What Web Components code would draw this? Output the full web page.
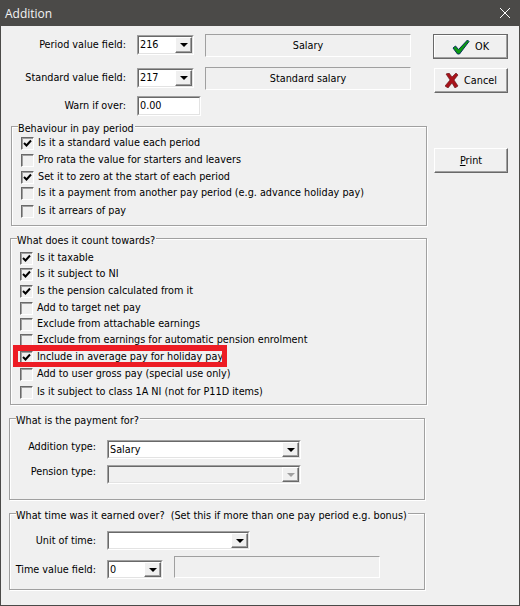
<!DOCTYPE html>
<html>
<head>
<meta charset="utf-8">
<title>Addition</title>
<style>
  html, body { margin: 0; padding: 0; background: #f0f0f0; }
  body { width: 520px; height: 606px; overflow: hidden; font: 10.75px "DejaVu Sans Condensed", "Liberation Sans", Arial, sans-serif; color: #000; }
</style>
</head>
<body>
<win-dialog caption="Addition">
  <div slot="left">
    <form-row label="Period value field:" labelwidth="125" gap="11" bottom="11">
      <combo-box value="216" width="57" height="20"></combo-box>
      <static-field text="Salary" width="206" left="11"></static-field>
    </form-row>
    <form-row label="Standard value field:" labelwidth="125" gap="11" bottom="6">
      <combo-box value="217" width="57" height="20"></combo-box>
      <static-field text="Standard salary" width="206" left="11"></static-field>
    </form-row>
    <form-row label="Warn if over:" labelwidth="125" gap="11" bottom="0">
      <text-field value="0.00" width="64"></text-field>
    </form-row>

    <group-box caption="Behaviour in pay period" left="10" width="416" top="10" height="100" inset="9" first="-1">
      <check-row pitch="17" checked>Is it a standard value each period</check-row>
      <check-row pitch="17">Pro rata the value for starters and leavers</check-row>
      <check-row pitch="16" checked>Set it to zero at the start of each period</check-row>
      <check-row pitch="18">Is it a payment from another pay period (e.g. advance holiday pay)</check-row>
      <check-row pitch="17">Is it arrears of pay</check-row>
    </group-box>

    <group-box caption="What does it count towards?" left="9" width="417" top="12" height="167" inset="9" first="2">
      <check-row pitch="16" checked>Is it taxable</check-row>
      <check-row pitch="17" checked>Is it subject to NI</check-row>
      <check-row pitch="17" checked>Is the pension calculated from it</check-row>
      <check-row pitch="16">Add to target net pay</check-row>
      <check-row pitch="16">Exclude from attachable earnings</check-row>
      <check-row pitch="17">Exclude from earnings for automatic pension enrolment</check-row>
      <check-row pitch="17" checked marked>Include in average pay for holiday pay</check-row>
      <check-row pitch="18">Add to user gross pay (special use only)</check-row>
      <check-row pitch="17">Is it subject to class 1A NI (not for P11D items)</check-row>
    </group-box>

    <group-box caption="What is the payment for?" left="8" width="416" top="13" height="82" inset="0" first="12">
      <form-row label="Addition type:" labelwidth="86" gap="11" bottom="6" raise="3">
        <combo-box value="Salary" width="194" height="19"></combo-box>
      </form-row>
      <form-row label="Pension type:" labelwidth="86" gap="11" bottom="0" raise="3">
        <combo-box disabled width="194" height="19"></combo-box>
      </form-row>
    </group-box>

    <group-box caption="What time was it earned over?  (Set this if more than one pay period e.g. bonus)" left="8" width="416" top="13" height="77" inset="0" first="8">
      <form-row label="Unit of time:" labelwidth="86" gap="11" bottom="10">
        <combo-box width="143" height="19"></combo-box>
      </form-row>
      <form-row label="Time value field:" labelwidth="86" gap="11" bottom="0">
        <combo-box value="0" width="56" height="19"></combo-box>
        <static-field width="206" left="11" height="22" lift="4"></static-field>
      </form-row>
    </group-box>
  </div>
  <div slot="right">
    <push-button icon="ok" default>OK</push-button>
    <push-button icon="cancel" top="9" left="1">Cancel</push-button>
    <push-button top="55" left="1"><u>P</u>rint</push-button>
  </div>
</win-dialog>

<script>
/**
 * DIALOG FRAME
 * */

class WinDialog extends HTMLElement {
  constructor() {
    super();
    const shadow = this.attachShadow({ mode: "open" });
    shadow.innerHTML = `
      <style>
        :host { display: block; width: 520px; height: 606px; box-sizing: border-box; border: 1px solid #4b4a48; border-top: 0; background: #f0f0f0; }
        .title { height: 26px; margin: 0 -1px; background: #4b4a48; color: #f4f4f4; display: flex; align-items: center; justify-content: space-between; padding: 0 9px 0 5px; font: 12px "Open Sans", "Liberation Sans", sans-serif; }
        .body { display: flex; }
        .left { width: 432px; padding-top: 9px; }
        .right { padding-top: 8px; }
        svg { display: block; }
      </style>
      <div class="title">
        <span id="caption"></span>
        <svg width="12" height="12" viewBox="0 0 12 12"><path d="M1 1 11 11M11 1 1 11" stroke="#fff" stroke-width="1" fill="none"/></svg>
      </div>
      <div class="body">
        <div class="left"><slot name="left"></slot></div>
        <div class="right"><slot name="right"></slot></div>
      </div>`;
    shadow.getElementById("caption").textContent = this.getAttribute("caption");
  }
}
customElements.define("win-dialog", WinDialog);

/**
 * FORM CONTROLS
 * */

class FormRow extends HTMLElement {
  constructor() {
    super();
    const shadow = this.attachShadow({ mode: "open" });
    const labelWidth = this.getAttribute("labelwidth") || 126;
    const raise = this.getAttribute("raise") || 0;
    shadow.innerHTML = `
      <style>
        :host { display: flex; align-items: flex-start; margin-bottom: ${this.getAttribute("bottom") || 0}px; }
        .label { width: ${labelWidth}px; flex: none; text-align: right; line-height: 19px; white-space: nowrap; margin-top: -${raise}px; margin-right: ${this.getAttribute("gap") || 11}px; }
        .controls { display: flex; align-items: flex-start; }
      </style>
      <div class="label"></div>
      <div class="controls"><slot></slot></div>`;
    shadow.querySelector(".label").textContent = this.getAttribute("label");
  }
}
customElements.define("form-row", FormRow);

class ComboBox extends HTMLElement {
  constructor() {
    super();
    const shadow = this.attachShadow({ mode: "open" });
    const disabled = this.hasAttribute("disabled");
    const arrow = disabled ? "#a0a0a0" : "#000";
    shadow.innerHTML = `
      <style>
        :host { display: block; flex: none; box-sizing: border-box; width: ${this.getAttribute("width")}px; height: ${this.getAttribute("height")}px; border: 1px solid; border-color: #a0a0a0 #fff #fff #a0a0a0; }
        .inner { height: 100%; box-sizing: border-box; border: 1px solid; border-color: #696969 #e3e3e3 #e3e3e3 #696969; background: ${disabled ? "#f0f0f0" : "#fff"}; display: flex; justify-content: space-between; }
        .value { padding-left: 1px; line-height: 15px; white-space: nowrap; }
        .btn { width: 17px; height: 100%; box-sizing: border-box; background: #f0f0f0; border: 1px solid; border-color: #fff #696969 #696969 #fff; box-shadow: inset -1px -1px 0 #a0a0a0; display: flex; align-items: center; justify-content: center; }
        .btn i { display: block; width: 0; height: 0; border: 4px solid transparent; border-top: 4px solid ${arrow}; border-bottom: 0; }
      </style>
      <div class="inner"><span class="value"></span><span class="btn"><i></i></span></div>`;
    shadow.querySelector(".value").textContent = this.getAttribute("value") || "";
  }
}
customElements.define("combo-box", ComboBox);

class StaticField extends HTMLElement {
  constructor() {
    super();
    const shadow = this.attachShadow({ mode: "open" });
    const height = this.getAttribute("height") || 23;
    shadow.innerHTML = `
      <style>
        :host { display: flex; align-items: center; justify-content: center; box-sizing: border-box; flex: none; width: ${this.getAttribute("width")}px; height: ${height}px; margin-left: ${this.getAttribute("left") || 0}px; margin-top: -${this.getAttribute("lift") || 1}px; border: 1px solid; border-color: #a0a0a0 #fff #fff #a0a0a0; }
      </style>
      <span></span>`;
    shadow.querySelector("span").textContent = this.getAttribute("text") || "";
  }
}
customElements.define("static-field", StaticField);

class TextField extends HTMLElement {
  constructor() {
    super();
    const shadow = this.attachShadow({ mode: "open" });
    shadow.innerHTML = `
      <style>
        :host { display: block; flex: none; box-sizing: border-box; width: ${this.getAttribute("width")}px; height: 20px; border: 1px solid; border-color: #a0a0a0 #fff #fff #a0a0a0; }
        div { height: 100%; box-sizing: border-box; border: 1px solid; border-color: #696969 #e3e3e3 #e3e3e3 #696969; background: #fff; padding-left: 1px; line-height: 15px; }
      </style>
      <div></div>`;
    shadow.querySelector("div").textContent = this.getAttribute("value") || "";
  }
}
customElements.define("text-field", TextField);

class CheckRow extends HTMLElement {
  constructor() {
    super();
    const shadow = this.attachShadow({ mode: "open" });
    const tick = this.hasAttribute("checked")
      ? `<svg width="9" height="9" viewBox="0 0 9 9"><path d="M1 4 3.5 6.5 8 1.5" stroke="#000" stroke-width="2" fill="none"/></svg>`
      : "";
    const mark = this.hasAttribute("marked") ? `<div class="mark"></div>` : "";
    shadow.innerHTML = `
      <style>
        :host { display: flex; align-items: flex-start; position: relative; height: ${this.getAttribute("pitch") || 17}px; white-space: nowrap; }
        .box { width: 13px; height: 13px; margin-top: 2px; box-sizing: border-box; flex: none; margin-right: 4px; border: 1px solid; border-color: #696969 #fff #fff #696969; box-shadow: inset 1px 1px 0 #a0a0a0; background: #f0f0f0; display: flex; align-items: center; justify-content: center; }
        .text { line-height: 15px; }
        .mark { position: absolute; left: -7px; top: -4px; width: 214px; height: 22px; box-sizing: border-box; border: 5px solid #ed1c24; border-top-width: 6px; pointer-events: none; }
      </style>
      <span class="box">${tick}</span><span class="text"><slot></slot></span>${mark}`;
  }
}
customElements.define("check-row", CheckRow);

class GroupBox extends HTMLElement {
  constructor() {
    super();
    const shadow = this.attachShadow({ mode: "open" });
    const attr = (name) => Number(this.getAttribute(name)) || 0;
    shadow.innerHTML = `
      <style>
        :host { display: block; box-sizing: border-box; width: ${attr("width")}px; height: ${attr("height")}px; margin: ${attr("top")}px 0 0 ${attr("left")}px; padding: 0 0 0 ${attr("inset")}px; border: 1px solid #a0a0a0; box-shadow: inset 1px 1px 0 #fff, 1px 1px 0 #fff; }
        .legend { display: table; margin: -6px 0 ${attr("first")}px ${6 - attr("inset")}px; padding-right: 1px; background: #f0f0f0; line-height: 15px; white-space: pre; }
      </style>
      <div class="legend"></div>
      <slot></slot>`;
    shadow.querySelector(".legend").textContent = this.getAttribute("caption");
  }
}
customElements.define("group-box", GroupBox);

/**
 * BUTTONS
 * */

const BUTTON_ICONS = {
  ok: `<svg width="18" height="16" viewBox="0 0 18 16"><path d="M1 9 3.5 7 6.5 10.5 15.5 1 17 2.5 7.5 15 5.5 15Z" fill="#0c9a12" stroke="#06305a" stroke-width="1"/></svg>`,
  cancel: `<svg width="14" height="15" viewBox="0 0 14 15"><path d="M1 1 4 0 7 4 11 0 13 2 9 7 13 13 10 15 7 10 3 15 0 13 5 7Z" fill="#a8121a" stroke="#5c1015" stroke-width=".6"/></svg>`,
};

class PushButton extends HTMLElement {
  constructor() {
    super();
    const shadow = this.attachShadow({ mode: "open" });
    const isDefault = this.hasAttribute("default");
    const icon = BUTTON_ICONS[this.getAttribute("icon")] || "";
    shadow.innerHTML = `
      <style>
        :host { display: flex; align-items: center; justify-content: center; gap: 5px; box-sizing: border-box; width: ${isDefault ? 75 : 74}px; height: 25px; margin: ${this.getAttribute("top") || 0}px 0 0 ${this.getAttribute("left") || 0}px; background: #f0f0f0; border: 1px solid; border-color: ${isDefault ? "#696969" : "#fff #696969 #696969 #fff"}; box-shadow: inset -1px -1px 0 #a0a0a0${isDefault ? ", inset 1px 1px 0 #fff" : ""}; }
        svg { display: block; }
      </style>
      ${icon}<span><slot></slot></span>`;
  }
}
customElements.define("push-button", PushButton);
</script>
</body>
</html>
